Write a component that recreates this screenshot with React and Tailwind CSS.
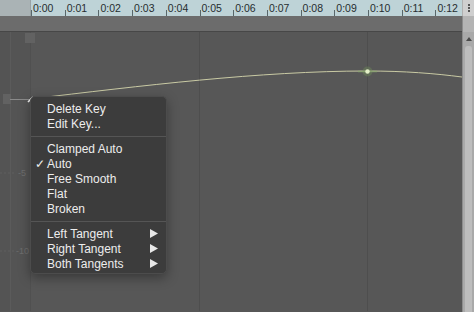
import React from 'react';

const ticks = ['0:00', '0:01', '0:02', '0:03', '0:04', '0:05', '0:06', '0:07', '0:08', '0:09', '0:10', '0:11', '0:12'];

const MenuItem = ({ label, checked, sub }) => (
  <div className="flex items-center h-[15px] pl-[4px] pr-[8px] text-[#ededed]">
    <span className="w-[12px] pr-[2px] text-right text-[12px] leading-none">{checked ? '✓' : ''}</span>
    <span className="flex-1 leading-none">{label}</span>
    {sub && (
      <svg width="8" height="9" viewBox="0 0 8 9">
        <path d="M0 0 L8 4.5 L0 9 Z" fill="#e8e8e8" />
      </svg>
    )}
  </div>
);

const Separator = () => (
  <div className="h-[10px] flex items-center">
    <div className="w-full h-px bg-[#555555]" />
  </div>
);

const ContextMenu = () => (
  <div
    className="absolute left-[30px] top-[64px] w-[137px] rounded-[5px] bg-[#3c3c3c] border border-[#4c4c4c] shadow-[0_4px_12px_rgba(0,0,0,0.35)] pt-[4px] pb-[2px] text-[12px]"
    style={{ fontFamily: '"Liberation Sans", Arial, sans-serif' }}
  >
    <MenuItem label="Delete Key" />
    <MenuItem label="Edit Key..." />
    <Separator />
    <MenuItem label="Clamped Auto" />
    <MenuItem label="Auto" checked />
    <MenuItem label="Free Smooth" />
    <MenuItem label="Flat" />
    <MenuItem label="Broken" />
    <Separator />
    <MenuItem label="Left Tangent" sub />
    <MenuItem label="Right Tangent" sub />
    <MenuItem label="Both Tangents" sub />
  </div>
);

const Ruler = () => (
  <div className="flex h-[16px]" style={{ fontFamily: '"Liberation Sans", Arial, sans-serif' }}>
    <div className="w-[31px] bg-[#aab3b5] border-r border-[#9aa3a5]" />
    <div className="relative flex-1 bg-[#bed3d7] overflow-hidden">
      {ticks.map((t, i) => (
        <div
          key={t}
          className="absolute top-0 h-full"
          style={{ left: i * 33.7 }}
        >
          <div className="absolute left-0 bottom-0 w-px h-[6px] bg-[#59676a]" />
          <span className="absolute left-[2px] top-[3px] text-[10.5px] leading-none text-[#262d2f]">{t}</span>
        </div>
      ))}
    </div>
    <div className="w-[12px] bg-[#cfcfcf] border-l border-[#b0b0b0] flex flex-col items-center justify-center gap-[1px]">
      <div className="w-[2px] h-[2px] bg-[#555]" />
      <div className="w-[2px] h-[2px] bg-[#555]" />
      <div className="w-[2px] h-[2px] bg-[#555]" />
    </div>
  </div>
);

const Graph = () => (
  <div className="relative flex-1 bg-[#575757] overflow-hidden">
    <svg className="absolute inset-0" width="462" height="279" viewBox="0 33 462 279">
      <rect x="0" y="33" width="30" height="279" fill="#545454" />
      <line x1="10.5" y1="33" x2="10.5" y2="312" stroke="#5b5b5b" />
      <line x1="30.5" y1="33" x2="30.5" y2="312" stroke="#505050" />
      <line x1="199.5" y1="33" x2="199.5" y2="312" stroke="#4e4e4e" />
      <line x1="367.5" y1="33" x2="367.5" y2="312" stroke="#4e4e4e" />
      <rect x="25" y="34" width="10" height="10" fill="#626262" />
      <rect x="3" y="95" width="8" height="10" fill="#626262" />
      <line x1="0" y1="174" x2="16" y2="174" stroke="#5f5f5f" strokeDasharray="2 2" />
      <line x1="0" y1="252" x2="15" y2="252" stroke="#5f5f5f" strokeDasharray="2 2" />
      <text x="18" y="177" fontSize="9" fill="#6e6e6e" fontFamily="Liberation Sans, Arial, sans-serif">-5</text>
      <text x="16" y="255" fontSize="9" fill="#6e6e6e" fontFamily="Liberation Sans, Arial, sans-serif">-10</text>
      <line x1="10" y1="100.5" x2="30" y2="100.5" stroke="#8a8a8a" />
      <path
        d="M30 100 C 140 87, 260 72, 367 72 C 405 72, 435 74.5, 462 78"
        fill="none"
        stroke="#c9caa4"
        strokeWidth="1"
      />
      <circle cx="367.5" cy="72.5" r="5" fill="#6f8a5a" opacity="0.45" />
      <line x1="358" y1="72.5" x2="377" y2="72.5" stroke="#8aa870" strokeWidth="1.5" opacity="0.7" />
      <circle cx="367.5" cy="72.5" r="2.2" fill="#e4f0c8" />
      <path d="M28 103 L33 98" stroke="#f0f0f0" strokeWidth="1.6" />
    </svg>
    <ContextMenu />
  </div>
);

const Scrollbar = () => (
  <div className="w-[12px] bg-[#a9a9a9] border-l border-[#8c8c8c] flex flex-col items-center">
    <div className="h-[16px] w-full bg-[#b4b4b4]" />
    <svg width="8" height="8" viewBox="0 0 8 8" className="mt-[3px]">
      <path d="M4 2 L7 6 L1 6 Z" fill="#4a4a4a" />
    </svg>
    <div className="mt-[3px] w-[7px] flex-1 bg-[#bdbdbd] rounded-t-[3px]" />
  </div>
);

export default function App() {
  return (
    <div className="w-[474px] h-[312px] flex flex-col overflow-hidden bg-[#575757]">
      <Ruler />
      <div className="flex flex-1">
        <div className="flex flex-col flex-1">
          <div className="h-[16px] bg-[#6c6c6c] border-b border-[#474747]" />
          <Graph />
        </div>
        <Scrollbar />
      </div>
    </div>
  );
}
